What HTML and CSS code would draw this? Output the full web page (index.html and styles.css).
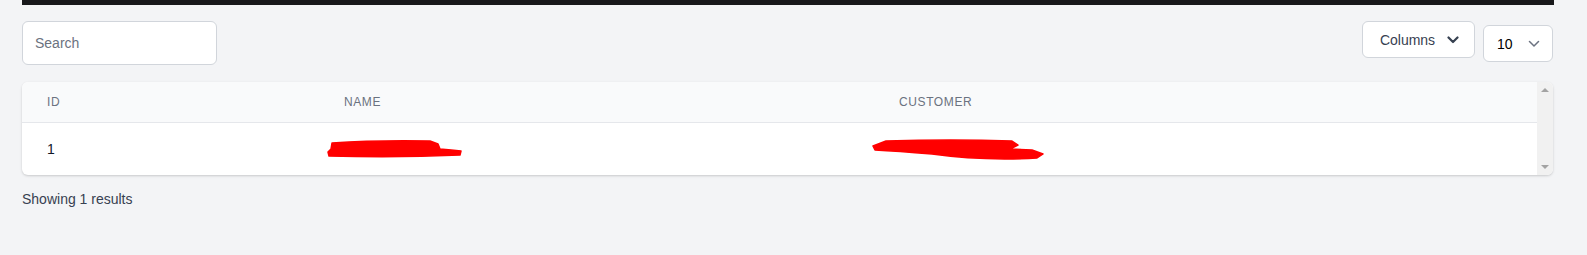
FILE: index.html
```html
<!DOCTYPE html>
<html>
<head>
<meta charset="utf-8">
<link rel="stylesheet" href="styles.css">
</head>
<body>
<div class="page">
  <div class="topbar"></div>
  <div class="toolbar">
    <input class="search" type="text" placeholder="Search">
    <div class="tools">
      <button class="btn-columns">Columns
        <svg class="chev-dark" width="12" height="8" viewBox="0 0 12 8"><path d="M1.5 1.5 L6 6 L10.5 1.5" fill="none" stroke="#374151" stroke-width="2.2" stroke-linecap="round" stroke-linejoin="round"/></svg>
      </button>
      <div class="page-size"><span>10</span>
        <svg width="12" height="8" viewBox="0 0 12 8"><path d="M1.5 1.5 L6 6 L10.5 1.5" fill="none" stroke="#6b7280" stroke-width="1.5" stroke-linecap="round" stroke-linejoin="round"/></svg>
      </div>
    </div>
  </div>
  <div class="card">
    <div class="table">
      <div class="thead">
        <div class="th">ID</div>
        <div class="th">Name</div>
        <div class="th">Customer</div>
      </div>
      <div class="tr">
        <div class="td">1</div>
        <div class="td redacted">
          <svg class="scribble name-scribble" width="140" height="22" viewBox="0 0 140 22">
            <path d="M6 5 Q50 2 104 3 L112 6 L114 11 Q126 12 135 13 L134 17 Q70 20 3 18 L2 14 L5 11 Z" fill="#ff0000" stroke="#ff0000" stroke-width="1.5" stroke-linejoin="round"/>
          </svg>
        </div>
        <div class="td redacted">
          <svg class="scribble cust-scribble" width="176" height="26" viewBox="0 0 176 26">
            <path d="M1 10 L14 5 Q80 3 140 5 L146 9 L138 13 L160 14 L171 18 L165 22 Q110 25 60 18 Q25 15 3 14 Z" fill="#ff0000" stroke="#ff0000" stroke-width="1.5" stroke-linejoin="round"/>
          </svg>
        </div>
      </div>
    </div>
    <div class="vscroll">
      <div class="arrow-up"></div>
      <div class="arrow-down"></div>
    </div>
  </div>
  <div class="summary">Showing 1 results</div>
</div>
</body>
</html>
```

FILE: styles.css
```css
html, body {
  margin: 0;
  padding: 0;
  background: #f3f4f6;
  font-family: "Liberation Sans", Arial, sans-serif;
}

.page {
  margin-left: 22px;
  width: 1532px;
}

.topbar {
  height: 5px;
  background: #18181b;
}

.toolbar {
  display: flex;
  justify-content: space-between;
  align-items: flex-start;
  margin-top: 16px;
}

.search {
  box-sizing: border-box;
  width: 195px;
  height: 44px;
  border: 1px solid #d1d5db;
  border-radius: 6px;
  background: #fff;
  padding: 0 12px;
  font-family: "Liberation Sans", Arial, sans-serif;
  font-size: 14px;
  color: #111827;
  outline: none;
}
.search::placeholder {
  color: #6b7280;
}

.tools {
  display: flex;
  align-items: flex-start;
  gap: 8px;
}

.btn-columns {
  box-sizing: border-box;
  width: 113px;
  height: 37px;
  border: 1px solid #d1d5db;
  border-radius: 6px;
  background: #fff;
  display: flex;
  align-items: center;
  justify-content: center;
  gap: 12px;
  padding: 0 0 0 2px;
  font-family: "Liberation Sans", Arial, sans-serif;
  font-size: 14px;
  color: #374151;
}

.page-size {
  box-sizing: border-box;
  width: 70px;
  height: 37px;
  margin-top: 4px;
  margin-right: 1px;
  border: 1px solid #d1d5db;
  border-radius: 6px;
  background: #fff;
  display: flex;
  align-items: center;
  justify-content: space-between;
  padding: 1px 12px 0 13px;
  font-size: 14px;
  color: #000;
}

.card {
  margin-top: 17px;
  width: 1531px;
  display: flex;
  background: #fff;
  border-radius: 6px;
  overflow: hidden;
  box-shadow: 0 1px 3px rgba(0, 0, 0, 0.12), 0 1px 2px rgba(0, 0, 0, 0.06);
}

.table {
  flex: 1;
}

.thead, .tr {
  display: grid;
  grid-template-columns: 297px 555px 1fr;
}

.thead {
  height: 40px;
  background: #f9fafb;
  border-bottom: 1px solid #e5e7eb;
  align-items: center;
}

.th {
  padding-left: 25px;
  font-size: 12px;
  letter-spacing: 0.05em;
  text-transform: uppercase;
  color: #6b7280;
}

.tr {
  height: 52px;
  align-items: center;
}

.td {
  padding-left: 25px;
  font-size: 14px;
  color: #111827;
  position: relative;
  height: 20px;
  line-height: 20px;
}

.scribble {
  position: absolute;
}
.name-scribble {
  left: 7px;
  top: -1px;
}
.cust-scribble {
  left: -2px;
  top: -3px;
}

.vscroll {
  width: 16px;
  background: #f1f1f1;
  display: flex;
  flex-direction: column;
  justify-content: space-between;
  align-items: center;
  padding: 6px 0;
  box-sizing: border-box;
}

.arrow-up {
  width: 0;
  height: 0;
  border-left: 4px solid transparent;
  border-right: 4px solid transparent;
  border-bottom: 4px solid #a3a3a3;
}

.arrow-down {
  width: 0;
  height: 0;
  border-left: 4px solid transparent;
  border-right: 4px solid transparent;
  border-top: 4px solid #a3a3a3;
}

.summary {
  margin-top: 14px;
  font-size: 14px;
  line-height: 20px;
  color: #374151;
}
```
